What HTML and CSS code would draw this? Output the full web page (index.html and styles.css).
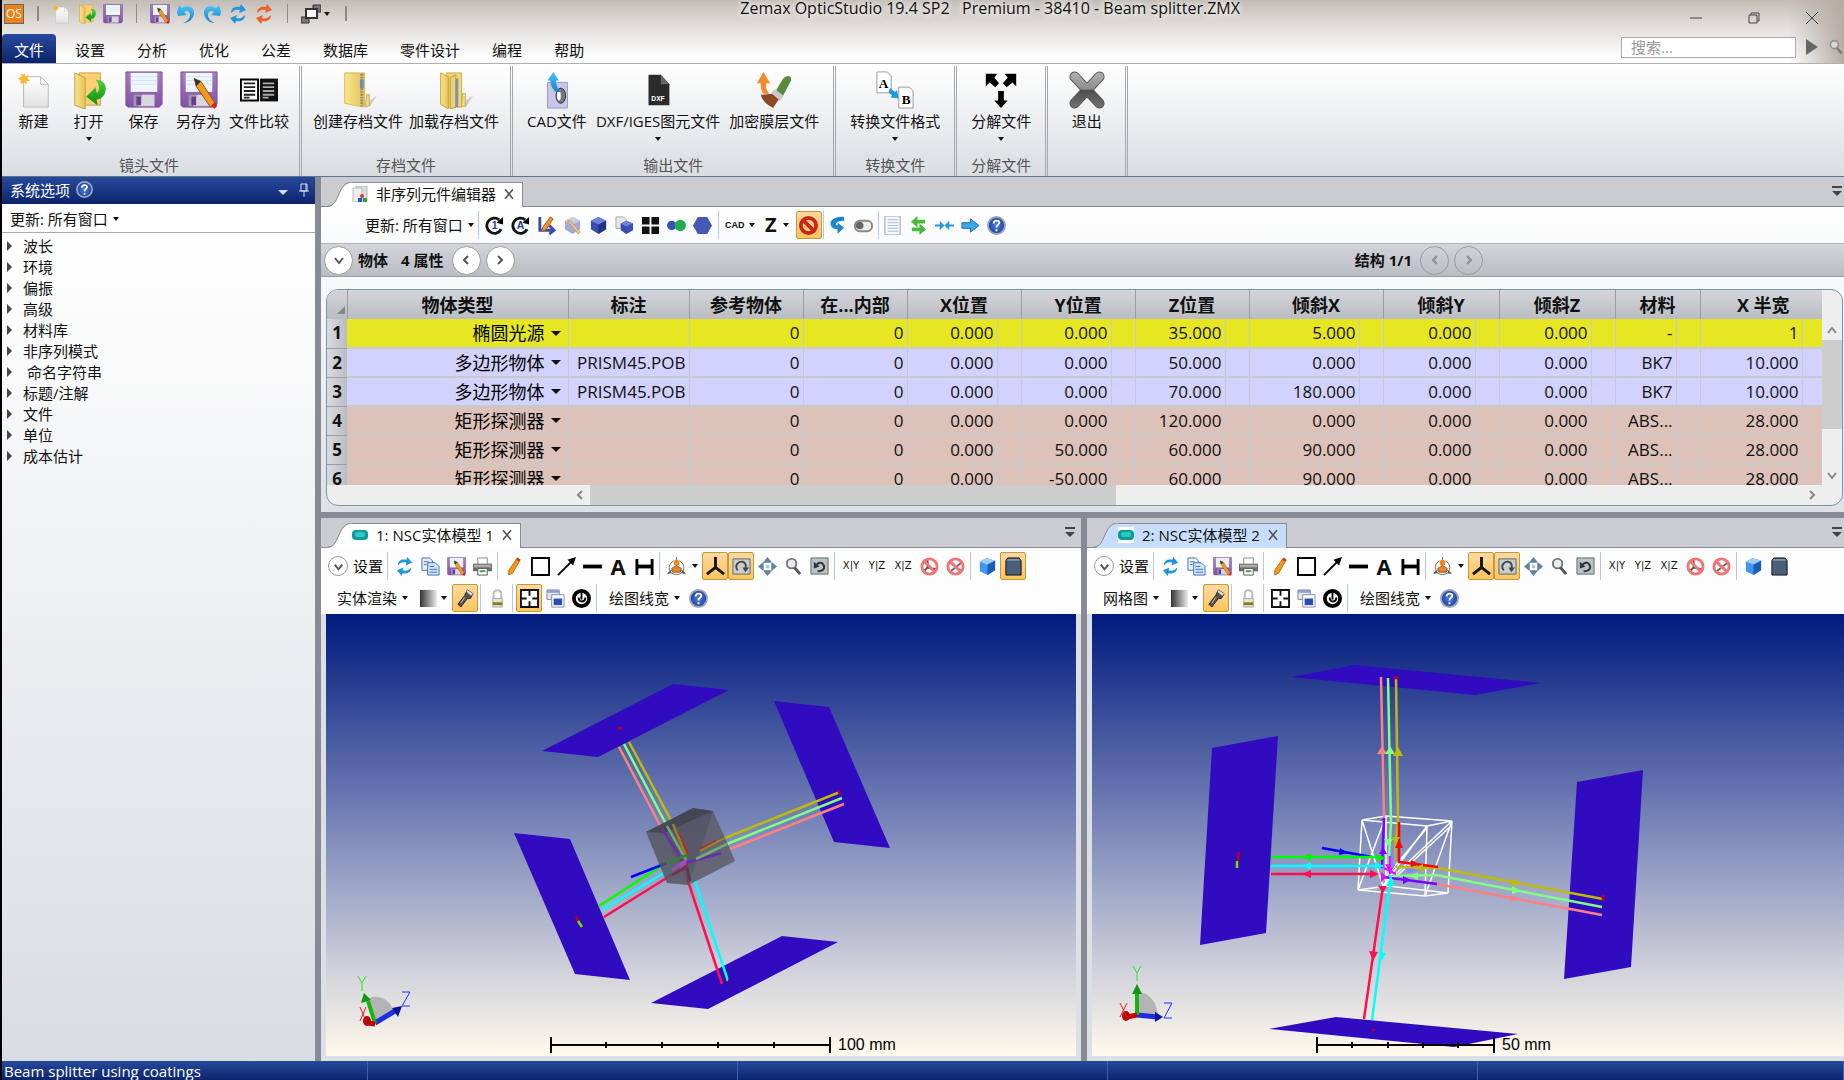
FILE: index.html
```
<!DOCTYPE html>
<html lang="zh-CN">
<head>
    <meta charset="UTF-8">
    <meta name="viewport" content="width=device-width, initial-scale=1.0">
    <title>Zemax OpticStudio</title>
    <link rel="stylesheet" href="styles.css">
</head>
<body>
<!-- 图标 -->
<svg class="sprite" aria-hidden="true">
    <defs>
        <linearGradient id="g-purple" x1="0" y1="0" x2="0" y2="1"><stop offset="0" stop-color="#a97dc4"/><stop offset="1" stop-color="#8450a8"/></linearGradient>
        <linearGradient id="g-folder" x1="0" y1="0" x2="1" y2="0"><stop offset="0" stop-color="#f7e48f"/><stop offset="1" stop-color="#e6c455"/></linearGradient>
        <linearGradient id="g-green" x1="0" y1="0" x2="0" y2="1"><stop offset="0" stop-color="#4fd33f"/><stop offset="1" stop-color="#0c8a10"/></linearGradient>
        <linearGradient id="g-blue" x1="0" y1="0" x2="0" y2="1"><stop offset="0" stop-color="#4cc3f7"/><stop offset="1" stop-color="#1583cf"/></linearGradient>
        <linearGradient id="g-gray" x1="0" y1="0" x2="0" y2="40" gradientUnits="userSpaceOnUse"><stop offset="0" stop-color="#b4b4b4"/><stop offset=".48" stop-color="#8d8d8d"/><stop offset=".5" stop-color="#4e4e4e"/><stop offset="1" stop-color="#757575"/></linearGradient>
        <linearGradient id="g-page" x1="0" y1="0" x2="0" y2="1"><stop offset="0" stop-color="#fff"/><stop offset="1" stop-color="#e2e2e2"/></linearGradient>
        <linearGradient id="g-shade" x1="0" y1="0" x2="1" y2="0"><stop offset="0" stop-color="#333"/><stop offset="1" stop-color="#eee"/></linearGradient>
        <linearGradient id="g-sky" x1="0" y1="0" x2="0" y2="1"><stop offset="0" stop-color="#001b7e"/><stop offset=".1" stop-color="#19308a"/><stop offset=".5" stop-color="#7f8bbb"/><stop offset=".8" stop-color="#cfd0da"/><stop offset="1" stop-color="#fffaec"/></linearGradient>
        <radialGradient id="g-help"><stop offset="0" stop-color="#4f7fe0"/><stop offset="1" stop-color="#1f3f9f"/></radialGradient>
    </defs>
    <symbol id="i-new" viewBox="0 0 40 40">
        <path d="M9 6h18l8 8v24H9z" fill="url(#g-page)" stroke="#b8b8b8"/>
        <path d="M27 6v8h8z" fill="#fff" stroke="#b8b8b8"/>
        <path d="M10 2l1 4 4-2-2 4 3 2-4 1 0 3-3-2-3 2 0-4-3-2 4-2-1-3 3 1z" fill="#f7b733"/>
    </symbol>
    <symbol id="i-open" viewBox="0 0 40 40">
        <path d="M10 2h22v34H10z" fill="#fbcf76" stroke="#caa13f"/>
        <path d="M5 2l11 5v33L5 36z" fill="url(#g-folder)" stroke="#c2a03a"/>
        <path d="M27 9c10 0 13 9 9 16-2 3-5 5-8 5l1 6-12-9 10-10 1 6c4-2 3-9-1-14z" fill="url(#g-green)"/>
    </symbol>
    <symbol id="i-save" viewBox="0 0 40 40">
        <path d="M1 1h38v34l-3 3H3l-2-2z" fill="url(#g-purple)" stroke="#7a4a9c"/>
        <path d="M6 2h28v20H6z" fill="#eef7fb"/>
        <path d="M6 6h28M6 10h28M6 14h28" stroke="#cfe0ea"/>
        <path d="M9 25h22v12H9z" fill="#9a9aa6"/>
        <path d="M18 25h13v12H14z" fill="#d6d6dc"/>
        <path d="M12 27h5v9h-5z" fill="#6b3d91"/>
    </symbol>
    <symbol id="i-saveas" viewBox="0 0 40 40">
        <use href="#i-save"/>
        <path d="M15 8l7 3 15 23-5 4-15-22z" fill="#f39a1c" stroke="#8a5412"/>
        <path d="M15 8l7 3-5 5z" fill="#333"/>
        <path d="M33 36l4-3 2 4-3 3z" fill="#dd2222"/>
    </symbol>
    <symbol id="i-compare" viewBox="0 0 40 40">
        <path d="M1 9h18v22H1z" fill="#fff" stroke="#000" stroke-width="2"/>
        <path d="M21 8h19v24H21z" fill="#111"/>
        <path d="M4 13h12M4 17h12M4 21h12M4 25h12M4 28h6" stroke="#222" stroke-width="2"/>
        <path d="M24 13h12M24 17h12M24 21h12M24 25h12M24 28h6" stroke="#aaa" stroke-width="2"/>
    </symbol>
    <symbol id="i-zip" viewBox="0 0 40 40">
        <path d="M28 34l12-8-8 12z" fill="#ccc"/>
        <path d="M6 2h21v35l-2 1-19-4z" fill="url(#g-folder)" stroke="#d3b75a"/>
        <path d="M29 25h3v11l-4 2z" fill="#f3dc86" stroke="#c9a948"/>
        <path d="M24 3v34" stroke="#8b8b8b" stroke-width="3" stroke-dasharray="2 1"/>
        <path d="M22 9h4v9h-4z" fill="#6c8fb6"/>
    </symbol>
    <symbol id="i-unzip" viewBox="0 0 40 40">
        <path d="M28 34l12-8-8 13z" fill="#ccc"/>
        <path d="M12 2h16v36H12z" fill="#f0d37b" stroke="#cfae4c"/>
        <path d="M6 2l8 4v34l-8-5z" fill="url(#g-folder)" stroke="#c2a03a"/>
        <path d="M16 7l6-3v34l-6 2z" fill="#ecd074" stroke="#c2a03a"/>
        <path d="M23 8v30" stroke="#7895b4" stroke-width="3"/>
        <path d="M29 24h3v12l-4 2z" fill="#f3dc86" stroke="#c9a948"/>
    </symbol>
    <symbol id="i-cad" viewBox="0 0 40 40">
        <path d="M10 12h21v27H10z" fill="#c9c6e8" stroke="#9c98cc"/>
        <ellipse cx="24" cy="26" rx="5" ry="8" fill="#777" stroke="#333"/>
        <ellipse cx="22" cy="26" rx="2" ry="5" fill="#fff"/>
        <path d="M16 1l6 9h-3c0 6 2 9 5 12h-5c-4-3-6-7-6-12h-3z" fill="url(#g-blue)"/>
    </symbol>
    <symbol id="i-dxf" viewBox="0 0 40 40">
        <path d="M10 4h13l9 10v22H10z" fill="#2b2b2b"/>
        <path d="M23 4v10h9z" fill="#666"/>
    </symbol>
    <symbol id="i-coat" viewBox="0 0 40 40">
        <path d="M29 9c3-5 10-5 9 1L28 29l-8-5z" fill="#5a8a3c"/>
        <path d="M21 19l9 7-4 6-9-9z" fill="#c9c9c9"/>
        <path d="M6 25l12-1 7 6-6 9c-6-3-11-7-13-14z" fill="#8e4b21"/>
        <path d="M9 1l7 12h-4c-1 4 0 7 3 11H9c-3-4-3-7-3-11H2z" fill="#f28c33"/>
    </symbol>
    <symbol id="i-convert" viewBox="0 0 40 40">
        <path d="M1 1h11l4 4v18H1z" fill="#fff" stroke="#999"/>
        <path d="M24 17h11l4 4v18H24z" fill="#fff" stroke="#999"/>
        <path d="M15 18l5 4 2-2 2 9-9-1 2-2-4-4z" fill="#1f9ae0"/>
    </symbol>
    <symbol id="i-split" viewBox="0 0 40 40">
        <path d="M4 3h12l-3 4 5 6-4 4-6-5-4 4zM36 3H24l3 4-5 6 4 4 6-5 4 4zM17 21h6v10h4l-7 8-7-8h4z"/>
    </symbol>
    <symbol id="i-exit" viewBox="0 0 40 40">
        <path d="M7 6l26 28M33 6L7 34" stroke="#555" stroke-width="11" stroke-linecap="round"/>
        <path d="M7 6l26 28M33 6L7 34" stroke="url(#g-gray)" stroke-width="9" stroke-linecap="round"/>
    </symbol>

    <symbol id="i-undo" viewBox="0 0 20 20"><path d="M1 8l2-7 3 3c6-4 13-1 12 6-1 5-5 9-11 9 5-2 7-5 7-8 0-4-3-5-6-3l3 3-9 1z" fill="url(#g-blue)"/></symbol>
    <symbol id="i-redo" viewBox="0 0 20 20"><path d="M19 8l-2-7-3 3C8 0 1 3 2 10c1 5 5 9 11 9-5-2-7-5-7-8 0-4 3-5 6-3l-3 3 9 1z" fill="url(#g-blue)"/></symbol>
    <symbol id="i-refresh" viewBox="0 0 20 20"><path d="M3 9c0-5 4-7 9-6l1-3 5 6-7 3 1-3c-4-1-6 0-9 3zM17 11c0 5-4 7-9 6l-1 3-5-6 7-3-1 3c4 1 6 0 9-3z" fill="#2196dc"/></symbol>
    <symbol id="i-refresh-o" viewBox="0 0 20 20"><path d="M3 9c0-5 4-7 9-6l1-3 5 6-7 3 1-3c-4-1-6 0-9 3zM17 11c0 5-4 7-9 6l-1 3-5-6 7-3-1 3c4 1 6 0 9-3z" fill="#e8622a"/></symbol>
    <symbol id="i-windows" viewBox="0 0 20 20"><path d="M12 1h8v7h-8zM0 13h8v6H0z" fill="#777" stroke="#333"/><path d="M5 5h11v9H5z" fill="#fff" stroke="#333" stroke-width="2"/></symbol>
    <symbol id="i-help" viewBox="0 0 20 20">
        <circle cx="10" cy="10" r="9" fill="url(#g-help)" stroke="#9aa5b8" stroke-width="2"/>
        <path d="M7 8c0-4 6-4 6-1 0 2-3 2-3 5M10 14v2" fill="none" stroke="#fff" stroke-width="2"/>
    </symbol>
    <symbol id="i-ring" viewBox="0 0 20 20"><path d="M15 4A8 8 0 1 0 17 14" fill="none" stroke="#111" stroke-width="3"/><path d="M12 7l7-6v8z"/></symbol>
    <symbol id="i-edit" viewBox="0 0 20 20"><path d="M3 1v14h14M13 10l5 5-5 4" fill="none" stroke="#3c4aa8" stroke-width="3"/><path d="M14 1l3 2-8 12-4 1 1-4z" fill="#f0952a" stroke="#a3561c"/></symbol>
    <symbol id="i-cube" viewBox="0 0 20 20"><path d="M2 5l8-4 8 4v9l-8 5-8-5z" fill="#3b4db0"/><path d="M2 5l8-4 8 4-8 4z" fill="#6a83d8"/><path d="M10 9l8-4v9l-8 5z" fill="#223284"/></symbol>
    <symbol id="i-cubepen" viewBox="0 0 20 20"><path d="M2 5l8-4 8 4v9l-8 5-8-5z" fill="#a3acd4"/><path d="M2 5l8-4 8 4-8 4z" fill="#c7cde8"/><path d="M5 5l3 0 10 12-2 2z" fill="#f0c590" stroke="#c99a62"/></symbol>
    <symbol id="i-cubecopy" viewBox="0 0 20 20"><path d="M1 1h8l3 3v9H1z" fill="#e4e4e4" stroke="#aaa"/><path d="M6 8l6-3 7 3v7l-7 4-6-4z" fill="#3b4db0"/><path d="M6 8l6-3 7 3-7 3z" fill="#6a83d8"/></symbol>
    <symbol id="i-four" viewBox="0 0 20 20"><path d="M1 1h8v8H1zM11 1h8v8h-8zM1 11h8v8H1zM11 11h8v8h-8z" fill="#111"/></symbol>
    <symbol id="i-dots" viewBox="0 0 20 20"><circle cx="5" cy="10" r="5" fill="#3c4fb5"/><circle cx="14" cy="10" r="6" fill="#1fae52"/></symbol>
    <symbol id="i-hex" viewBox="0 0 20 20"><path d="M5 1h10l5 9-5 9H5l-5-9z" fill="#4858b5"/></symbol>
    <symbol id="i-no" viewBox="0 0 20 20"><circle cx="10" cy="10" r="8" fill="none" stroke="#c8281b" stroke-width="4"/><path d="M4 4l12 12" stroke="#c8281b" stroke-width="4"/></symbol>
    <symbol id="i-back" viewBox="0 0 20 20"><path d="M17 1C8 0 1 4 3 10c1 3 4 4 7 4v5l7-7-7-5v3C6 9 9 5 17 5z" fill="#1e86cc"/></symbol>
    <symbol id="i-switch" viewBox="0 0 20 20"><rect x="1" y="5" width="18" height="11" rx="5" fill="#eee" stroke="#888" stroke-width="2"/><circle cx="6" cy="10" r="4" fill="#666"/></symbol>
    <symbol id="i-sheet" viewBox="0 0 20 20"><path d="M2 0h16v20H2z" fill="#f4f7fb" stroke="#8fa0b2"/><path d="M5 4h11M5 7h11M5 10h11M5 13h11M5 16h11" stroke="#a8bdd6"/></symbol>
    <symbol id="i-swap" viewBox="0 0 20 20"><path d="M2 6l7-6v4h8v4H9v4zM18 14l-7-6v4H3v4h8v4z" fill="#4cb83c"/></symbol>
    <symbol id="i-meet" viewBox="0 0 20 20"><path d="M0 9h5V5l5 5-5 5v-4H0zM20 9h-5V5l-5 5 5 5v-4h5z" fill="#2a9ae0"/></symbol>
    <symbol id="i-right" viewBox="0 0 20 20"><path d="M1 7h9V3l9 7-9 7v-4H1z" fill="#3aa7e6" stroke="#1c6fae"/></symbol>
    <symbol id="i-copy" viewBox="0 0 20 20"><path d="M1 1h8l3 3v10H1z" fill="#e8f1fc" stroke="#3d6fb3"/><path d="M7 6h8l4 4v9H7z" fill="#d2e4fa" stroke="#3d6fb3"/><path d="M9 10h5M9 13h8M9 16h8M3 5h5M3 8h3" stroke="#3d6fb3"/></symbol>
    <symbol id="i-print" viewBox="0 0 20 20"><path d="M5 1h10v7H5z" fill="#fff" stroke="#888"/><path d="M0 7h20v8H0z" fill="#6c6c6c"/><path d="M1 8h18v3H1z" fill="#aaa"/><path d="M5 12h10v7H5z" fill="#fff" stroke="#555"/><path d="M7 15h6" stroke="#37a63b" stroke-width="2"/></symbol>
    <symbol id="i-pencil" viewBox="0 0 20 20"><path d="M13 1l3 2-8 14-4 2 0-5z" fill="#f39a1c" stroke="#b56a14"/><path d="M13 1l3 2-1 2-3-2z" fill="#cf2f22"/></symbol>
    <symbol id="i-rect" viewBox="0 0 20 20"><path d="M1 1h18v18H1z" fill="#fff" stroke="#000" stroke-width="2"/></symbol>
    <symbol id="i-arrow" viewBox="0 0 20 20"><path d="M1 19L16 4" stroke="#000" stroke-width="2"/><path d="M20 0l-3 9-6-6z"/></symbol>
    <symbol id="i-line" viewBox="0 0 20 20"><path d="M0 10h20" stroke="#000" stroke-width="4"/></symbol>
    <symbol id="i-dim" viewBox="0 0 20 20"><path d="M2 2v17M18 2v17" stroke="#000" stroke-width="3"/><path d="M2 10h16" stroke="#000" stroke-width="4"/></symbol>
    <symbol id="i-tripod" viewBox="0 0 20 20"><path d="M10 10V0M10 10l9 7M10 10l-9 7M7 4c-5 3-6 8-3 12M13 4c5 3 6 8 3 12M5 17c3 2 7 2 10 0" fill="none" stroke="#666"/><circle cx="10" cy="6" r="3" fill="#f08a1d"/><path d="M5 12l5-3 5 3-1 4H6z" fill="#e9842a" stroke="#8f5a2a"/><path d="M0 18l4-4 1 3zM20 18l-4-4-1 3z" fill="#555"/></symbol>
    <symbol id="i-axes" viewBox="0 0 20 20"><path d="M10 0v11L1 18M10 11l9 7" fill="none" stroke="#111" stroke-width="3"/></symbol>
    <symbol id="i-rotate" viewBox="0 0 20 20"><path d="M1 2h18v16H1z" fill="#c6cfc9" stroke="#58676a"/><path d="M6 14c-4-5 1-10 5-9s4 5 3 7" fill="none" stroke="#445" stroke-width="2"/><path d="M11 11h7l-4 5z" fill="#445"/></symbol>
    <symbol id="i-revert" viewBox="0 0 20 20"><path d="M1 1h18v17H1z" fill="#b9c3c0" stroke="#58676a"/><path d="M8 15c7 0 8-4 6-7s-5-2-7 0" fill="none" stroke="#334" stroke-width="2"/><path d="M4 5v7l6-2z" fill="#334"/></symbol>
    <symbol id="i-move" viewBox="0 0 20 20"><path d="M10 0l5 6H5zM10 20l5-6H5zM0 10l6-5v10zM20 10l-6-5v10z" fill="#5f82a3"/><circle cx="10" cy="10" r="2" fill="#b8c6d3"/></symbol>
    <symbol id="i-zoom" viewBox="0 0 20 20"><circle cx="8" cy="7" r="5" fill="#e8eef2" stroke="#777" stroke-width="2"/><path d="M11 11l6 7" stroke="#555" stroke-width="3"/></symbol>
    <symbol id="i-noray" viewBox="0 0 20 20"><path d="M8 3v8l-4 4M8 11l9 2" fill="none" stroke="#555" stroke-width="2"/><circle cx="10" cy="10" r="8" fill="none" stroke="#f07575" stroke-width="3"/><path d="M4 4l12 12" stroke="#f07575" stroke-width="3"/></symbol>
    <symbol id="i-noaxes" viewBox="0 0 20 20"><path d="M5 6l11 9M5 15l11-9" fill="none" stroke="#666" stroke-width="2"/><circle cx="10" cy="10" r="8" fill="none" stroke="#f07575" stroke-width="3"/><path d="M4 4l12 12" stroke="#f07575" stroke-width="3"/></symbol>
    <symbol id="i-bluecube" viewBox="0 0 20 20"><path d="M2 5l7-4 9 3v10l-8 5-8-4z" fill="#3f96ee"/><path d="M2 5l7-4 9 3-8 4z" fill="#9dcdf9"/><path d="M10 8l8-4v10l-8 5z" fill="#1d5fae"/></symbol>
    <symbol id="i-body" viewBox="0 0 20 20"><path d="M4 1h12l2 3v15H2V4z" fill="#4a5f7a" stroke="#111" stroke-width="1"/><path d="M4 2h12l1 2H3z" fill="#8397ad"/></symbol>
    <symbol id="i-shade" viewBox="0 0 20 20"><path d="M1 1h18v18H1z" fill="url(#g-shade)"/></symbol>
    <symbol id="i-torch" viewBox="0 0 20 20"><path d="M12 1l6 4-3 5h-3l-7 9-3-3 7-9z" fill="#555" stroke="#222"/><path d="M12 1l6 4-2 2-5-4z" fill="#ddd"/><path d="M9 9l-4 6" stroke="#ccc"/></symbol>
    <symbol id="i-lock" viewBox="0 0 20 20"><path d="M6 11V5c0-5 8-5 8 0v6" fill="none" stroke="#bbb" stroke-width="2"/><path d="M5 10h10v9H5z" fill="#e6e6c8" stroke="#aaa"/><path d="M5 14h10v3H5z" fill="#8a7a22"/></symbol>
    <symbol id="i-fit" viewBox="0 0 20 20"><path d="M1 1h18v18H1z" fill="#fff" stroke="#111" stroke-width="2"/><path d="M10 2v5M10 13v5M2 10h5M13 10h5" stroke="#111" stroke-width="2"/></symbol>
    <symbol id="i-clone" viewBox="0 0 20 20"><path d="M1 1h13v10H1z" fill="#dfe6f2" stroke="#7d8db0"/><path d="M1 1h13v3H1z" fill="#8ca0c8"/><path d="M6 6h13v13H6z" fill="#fff" stroke="#7d8db0"/><path d="M8 10h9v7H8z" fill="#2b4fb0"/></symbol>
    <symbol id="i-clock" viewBox="0 0 20 20"><circle cx="10" cy="10" r="8" fill="#fff" stroke="#000" stroke-width="4"/><path d="M10 4v7M7 9c0 6 7 5 7 0" fill="none" stroke="#000" stroke-width="2"/></symbol>
    <symbol id="i-pill" viewBox="0 0 16 16"><rect x="0" y="3" width="16" height="10" rx="4" fill="#0b9a98"/><rect x="3" y="5" width="10" height="5" rx="2" fill="#2cc9c4"/></symbol>
    <symbol id="i-editor" viewBox="0 0 16 16"><path d="M4 0h11v14H4z" fill="#d9dde0" stroke="#b6babd"/><path d="M1 2h9v14H1z" fill="#eceeef" stroke="#bbb"/><circle cx="10" cy="10" r="2" fill="#d93a2b"/><path d="M6 12h4v4H6z" fill="#2c59c0"/><path d="M11 12h4v4h-4z" fill="#2fa33c"/></symbol>
    <symbol id="i-down" viewBox="0 0 20 20"><path d="M6 8l4 5 4-5" fill="none" stroke="currentColor" stroke-width="2"/></symbol>
    <symbol id="i-up" viewBox="0 0 20 20"><path d="M6 13l4-5 4 5" fill="none" stroke="currentColor" stroke-width="2"/></symbol>
    <symbol id="i-prev" viewBox="0 0 20 20"><path d="M12 6l-4 4 4 4" fill="none" stroke="currentColor" stroke-width="2"/></symbol>
    <symbol id="i-next" viewBox="0 0 20 20"><path d="M8 6l4 4-4 4" fill="none" stroke="currentColor" stroke-width="2"/></symbol>
    <symbol id="i-x" viewBox="0 0 20 20"><path d="M5 4l10 12M15 4L5 16" stroke="#555" stroke-width="2"/></symbol>
    <symbol id="i-list" viewBox="0 0 12 12"><path d="M1 1h10v2H1zM1 6h10l-5 5z" fill="#444"/></symbol>
    <symbol id="i-tab" viewBox="0 0 24 25" preserveAspectRatio="none"><path d="M0 25C12 24 10 1 24 1v24z" fill="currentColor"/><path d="M0 24C12 24 9 0 24 0" fill="none" stroke="#888b96"/></symbol>
</svg>

<div class="app">
    <header class="titlebar">
        <div class="title-row">
            <div class="quick">
                <span class="logo">OS</span>
                <i class="bar"></i>
                <button aria-label="新建"><svg><use href="#i-new"/></svg></button>
                <button aria-label="打开"><svg><use href="#i-open"/></svg></button>
                <button aria-label="保存"><svg><use href="#i-save"/></svg></button>
                <i class="bar thin"></i>
                <button aria-label="另存为"><svg><use href="#i-saveas"/></svg></button>
                <button aria-label="撤消"><svg><use href="#i-undo"/></svg></button>
                <button aria-label="重做"><svg><use href="#i-redo"/></svg></button>
                <button aria-label="更新"><svg><use href="#i-refresh"/></svg></button>
                <button aria-label="更新全部"><svg><use href="#i-refresh-o"/></svg></button>
                <i class="bar thin"></i>
                <button class="wide" aria-label="窗口"><svg><use href="#i-windows"/></svg><i class="caret"></i></button>
                <i class="bar"></i>
            </div>
            <h1 class="app-title">Zemax OpticStudio 19.4 SP2   Premium - 38410 - Beam splitter.ZMX</h1>
            <div class="win-buttons">
                <button aria-label="最小化"><svg viewBox="0 0 12 12"><path d="M0 6h12"/></svg></button>
                <button aria-label="还原"><svg viewBox="0 0 12 12"><path d="M1 3h8v8H1zM3 3V1h8v8H9"/></svg></button>
                <button aria-label="关闭"><svg viewBox="0 0 12 12"><path d="M0 0l12 12M12 0L0 12"/></svg></button>
            </div>
        </div>
        <div class="menu-row">
            <nav class="menu">
                <a class="active" href="#">文件</a>
                <a href="#">设置</a>
                <a href="#">分析</a>
                <a href="#">优化</a>
                <a href="#">公差</a>
                <a href="#">数据库</a>
                <a href="#">零件设计</a>
                <a href="#">编程</a>
                <a href="#">帮助</a>
            </nav>
            <div class="search">
                <input type="text" placeholder="搜索..." aria-label="搜索">
                <button aria-label="执行搜索"><svg viewBox="0 0 12 16"><path d="M0 0l12 8-12 8z" fill="#666"/></svg></button>
                <svg class="lens"><use href="#i-zoom"/></svg>
            </div>
        </div>
    </header>

    <div class="ribbon">
        <section class="group lens-files">
            <div class="group-items">
                <button><svg><use href="#i-new"/></svg>新建</button>
                <button><svg><use href="#i-open"/></svg>打开<i class="caret"></i></button>
                <button><svg><use href="#i-save"/></svg>保存</button>
                <button><svg><use href="#i-saveas"/></svg>另存为</button>
                <button><svg><use href="#i-compare"/></svg>文件比较</button>
            </div>
            <h2>镜头文件</h2>
        </section>
        <section class="group archive">
            <div class="group-items">
                <button><svg><use href="#i-zip"/></svg>创建存档文件</button>
                <button><svg><use href="#i-unzip"/></svg>加载存档文件</button>
            </div>
            <h2>存档文件</h2>
        </section>
        <section class="group">
            <div class="group-items">
                <button><svg><use href="#i-cad"/></svg>CAD文件</button>
                <button><svg viewBox="0 0 40 40"><use href="#i-dxf"/><text x="13" y="32" class="t-dxf">DXF</text></svg>DXF/IGES图元文件<i class="caret"></i></button>
                <button><svg><use href="#i-coat"/></svg>加密膜层文件</button>
            </div>
            <h2>输出文件</h2>
        </section>
        <section class="group">
            <div class="group-items">
                <button><svg viewBox="0 0 40 40"><use href="#i-convert"/><text x="3" y="18" class="t-ab">A</text><text x="27" y="35" class="t-ab">B</text></svg>转换文件格式<i class="caret"></i></button>
            </div>
            <h2>转换文件</h2>
        </section>
        <section class="group">
            <div class="group-items">
                <button><svg><use href="#i-split"/></svg>分解文件<i class="caret"></i></button>
            </div>
            <h2>分解文件</h2>
        </section>
        <section class="group">
            <div class="group-items">
                <button><svg><use href="#i-exit"/></svg>退出</button>
            </div>
        </section>
    </div>

    <div class="main">
        <aside class="sidebar">
            <div class="side-head">
                <span>系统选项</span>
                <svg class="help"><use href="#i-help"/></svg>
                <button class="push" aria-label="菜单"><i class="caret big"></i></button>
                <button aria-label="固定"><svg class="pin" viewBox="0 0 10 14"><path d="M2 1h6v7H2zM0 8h10M5 8v6M7 1v7" fill="none" stroke="#d5dcf0"/></svg></button>
            </div>
            <button class="side-update">更新: 所有窗口<i class="caret"></i></button>
            <ul class="tree">
                <li><button>波长</button></li>
                <li><button>环境</button></li>
                <li><button>偏振</button></li>
                <li><button>高级</button></li>
                <li><button>材料库</button></li>
                <li><button>非序列模式</button></li>
                <li><button>&nbsp;命名字符串</button></li>
                <li><button>标题/注解</button></li>
                <li><button>文件</button></li>
                <li><button>单位</button></li>
                <li><button>成本估计</button></li>
            </ul>
        </aside>

        <div class="work">
            <section class="panel editor">
                <div class="tabs">
                    <div class="tab">
                        <svg class="slope"><use href="#i-tab"/></svg>
                        <div class="tab-body"><svg><use href="#i-editor"/></svg><span>非序列元件编辑器</span><button aria-label="关闭"><svg><use href="#i-x"/></svg></button></div>
                    </div>
                    <svg class="tab-list"><use href="#i-list"/></svg>
                </div>
                <div class="toolbar">
                    <button class="text first">更新: 所有窗口<i class="caret"></i></button>
                    <i class="sep"></i>
                    <button aria-label="更新一次"><svg viewBox="0 0 20 20"><use href="#i-ring"/><text x="7" y="14" class="t-ring">1</text></svg></button>
                    <button aria-label="自动更新"><svg viewBox="0 0 20 20"><use href="#i-ring"/><text x="6" y="14" class="t-ring">A</text></svg></button>
                    <button aria-label="编辑"><svg><use href="#i-edit"/></svg></button>
                    <button aria-label="编辑物体"><svg><use href="#i-cubepen"/></svg></button>
                    <button aria-label="物体"><svg><use href="#i-cube"/></svg></button>
                    <button aria-label="复制物体"><svg><use href="#i-cubecopy"/></svg></button>
                    <button aria-label="阵列"><svg><use href="#i-four"/></svg></button>
                    <button aria-label="布尔"><svg><use href="#i-dots"/></svg></button>
                    <button aria-label="多边形"><svg><use href="#i-hex"/></svg></button>
                    <i class="sep"></i>
                    <button class="cad">CAD<i class="caret"></i></button>
                    <button class="zed">Z<i class="caret"></i></button>
                    <button class="on" aria-label="忽略"><svg><use href="#i-no"/></svg></button>
                    <i class="sep near"></i>
                    <button aria-label="返回"><svg><use href="#i-back"/></svg></button>
                    <button aria-label="切换"><svg><use href="#i-switch"/></svg></button>
                    <i class="sep near"></i>
                    <button aria-label="表格"><svg><use href="#i-sheet"/></svg></button>
                    <button aria-label="交换"><svg><use href="#i-swap"/></svg></button>
                    <button aria-label="列宽"><svg><use href="#i-meet"/></svg></button>
                    <button aria-label="前往"><svg><use href="#i-right"/></svg></button>
                    <button aria-label="帮助"><svg><use href="#i-help"/></svg></button>
                </div>
                <div class="propbar">
                    <button class="round" aria-label="展开"><svg><use href="#i-down"/></svg></button>
                    <b>物体</b>
                    <b class="prop-no">4 属性</b>
                    <button class="round" aria-label="上一个"><svg><use href="#i-prev"/></svg></button>
                    <button class="round" aria-label="下一个"><svg><use href="#i-next"/></svg></button>
                    <b class="config">结构 1/1</b>
                    <button class="round off" aria-label="上一个结构" disabled><svg><use href="#i-prev"/></svg></button>
                    <button class="round off" aria-label="下一个结构" disabled><svg><use href="#i-next"/></svg></button>
                </div>
                <div class="grid-wrap">
                    <div class="grid-box">
                        <div class="grid-view">
                            <table class="grid">
                                <colgroup>
                                    <col class="c-no"><col class="c-type"><col class="c-note"><col class="c-ref"><col class="c-in">
                                    <col class="c-pos"><col class="c-fit"><col class="c-pos"><col class="c-fit"><col class="c-pos"><col class="c-fit">
                                    <col class="c-tiltx"><col class="c-fit"><col class="c-tilt"><col class="c-fit"><col class="c-tilt"><col class="c-fit">
                                    <col class="c-mat"><col class="c-fit"><col class="c-half"><col>
                                </colgroup>
                                <thead>
                                <tr>
                                    <th class="corner"><i></i></th>
                                    <th>物体类型</th><th>标注</th><th>参考物体</th><th>在...内部</th>
                                    <th colspan="2">X位置</th><th colspan="2">Y位置</th><th colspan="2">Z位置</th>
                                    <th colspan="2">倾斜X</th><th colspan="2">倾斜Y</th><th colspan="2">倾斜Z</th>
                                    <th colspan="2">材料</th><th colspan="2">X 半宽</th>
                                </tr>
                                </thead>
                                <tbody>
                                <tr class="source">
                                    <th>1</th>
                                    <td class="type"><span><select aria-label="物体类型 1"><option>椭圆光源</option></select></span></td>
                                    <td></td><td>0</td><td>0</td><td>0.000</td><td></td><td>0.000</td><td></td><td>35.000</td><td></td><td>5.000</td><td></td><td>0.000</td><td></td><td>0.000</td><td></td><td>-</td><td></td><td>1</td><td></td>
                                </tr>
                                <tr class="solid">
                                    <th>2</th>
                                    <td class="type"><span><select aria-label="物体类型 2"><option>多边形物体</option></select></span></td>
                                    <td>PRISM45.POB</td><td>0</td><td>0</td><td>0.000</td><td></td><td>0.000</td><td></td><td>50.000</td><td></td><td>0.000</td><td></td><td>0.000</td><td></td><td>0.000</td><td></td><td>BK7</td><td></td><td>10.000</td><td></td>
                                </tr>
                                <tr class="solid">
                                    <th>3</th>
                                    <td class="type"><span><select aria-label="物体类型 3"><option>多边形物体</option></select></span></td>
                                    <td>PRISM45.POB</td><td>0</td><td>0</td><td>0.000</td><td></td><td>0.000</td><td></td><td>70.000</td><td></td><td>180.000</td><td></td><td>0.000</td><td></td><td>0.000</td><td></td><td>BK7</td><td></td><td>10.000</td><td></td>
                                </tr>
                                <tr class="detector">
                                    <th>4</th>
                                    <td class="type"><span><select aria-label="物体类型 4"><option>矩形探测器</option></select></span></td>
                                    <td></td><td>0</td><td>0</td><td>0.000</td><td></td><td>0.000</td><td></td><td>120.000</td><td></td><td>0.000</td><td></td><td>0.000</td><td></td><td>0.000</td><td></td><td>ABS...</td><td></td><td>28.000</td><td></td>
                                </tr>
                                <tr class="detector">
                                    <th>5</th>
                                    <td class="type"><span><select aria-label="物体类型 5"><option>矩形探测器</option></select></span></td>
                                    <td></td><td>0</td><td>0</td><td>0.000</td><td></td><td>50.000</td><td></td><td>60.000</td><td></td><td>90.000</td><td></td><td>0.000</td><td></td><td>0.000</td><td></td><td>ABS...</td><td></td><td>28.000</td><td></td>
                                </tr>
                                <tr class="detector">
                                    <th>6</th>
                                    <td class="type"><span><select aria-label="物体类型 6"><option>矩形探测器</option></select></span></td>
                                    <td></td><td>0</td><td>0</td><td>0.000</td><td></td><td>-50.000</td><td></td><td>60.000</td><td></td><td>90.000</td><td></td><td>0.000</td><td></td><td>0.000</td><td></td><td>ABS...</td><td></td><td>28.000</td><td></td>
                                </tr>
                                </tbody>
                            </table>
                        </div>
                        <div class="vscroll">
                            <svg><use href="#i-up"/></svg>
                            <div class="vthumb"></div>
                            <svg class="end"><use href="#i-down"/></svg>
                        </div>
                        <div class="hscroll">
                            <svg><use href="#i-prev"/></svg>
                            <div class="hthumb"></div>
                            <svg class="end"><use href="#i-next"/></svg>
                        </div>
                    </div>
                </div>
            </section>

            <section class="panel view">
                <div class="tabs">
                    <div class="tab">
                        <svg class="slope"><use href="#i-tab"/></svg>
                        <div class="tab-body"><svg><use href="#i-pill"/></svg><span>1: NSC实体模型 1</span><button aria-label="关闭"><svg><use href="#i-x"/></svg></button></div>
                    </div>
                    <svg class="tab-list"><use href="#i-list"/></svg>
                </div>
                <div class="view-tools">
                    <div class="toolbar">
                        <button class="round small" aria-label="展开"><svg><use href="#i-down"/></svg></button>
                        <button class="text set">设置</button>
                        <i class="sep"></i>
                        <button aria-label="更新"><svg><use href="#i-refresh"/></svg></button>
                        <button aria-label="复制"><svg><use href="#i-copy"/></svg></button>
                        <button aria-label="保存"><svg><use href="#i-saveas"/></svg></button>
                        <button aria-label="打印"><svg><use href="#i-print"/></svg></button>
                        <i class="sep"></i>
                        <button aria-label="铅笔"><svg><use href="#i-pencil"/></svg></button>
                        <button aria-label="矩形"><svg><use href="#i-rect"/></svg></button>
                        <button aria-label="箭头"><svg><use href="#i-arrow"/></svg></button>
                        <button aria-label="直线"><svg><use href="#i-line"/></svg></button>
                        <button class="letter">A</button>
                        <button aria-label="尺寸"><svg><use href="#i-dim"/></svg></button>
                        <i class="sep"></i>
                        <button aria-label="视角"><svg><use href="#i-tripod"/></svg></button><i class="caret gap"></i>
                        <button class="on" aria-label="坐标轴"><svg><use href="#i-axes"/></svg></button>
                        <button class="on" aria-label="旋转"><svg><use href="#i-rotate"/></svg></button>
                        <button aria-label="平移"><svg><use href="#i-move"/></svg></button>
                        <button aria-label="缩放"><svg><use href="#i-zoom"/></svg></button>
                        <button aria-label="复位"><svg><use href="#i-revert"/></svg></button>
                        <i class="sep"></i>
                        <button class="plane">X|Y</button>
                        <button class="plane">Y|Z</button>
                        <button class="plane">X|Z</button>
                        <button aria-label="隐藏光线"><svg><use href="#i-noray"/></svg></button>
                        <button aria-label="隐藏坐标"><svg><use href="#i-noaxes"/></svg></button>
                        <i class="sep"></i>
                        <button aria-label="立方体"><svg><use href="#i-bluecube"/></svg></button>
                        <button class="on" aria-label="实体"><svg><use href="#i-body"/></svg></button>
                    </div>
                    <div class="toolbar second">
                        <button class="text">实体渲染<i class="caret"></i></button>
                        <button class="grad" aria-label="背景"><svg><use href="#i-shade"/></svg><i class="caret"></i></button>
                        <button class="on" aria-label="照明"><svg><use href="#i-torch"/></svg></button>
                        <i class="sep"></i>
                        <button aria-label="锁定"><svg><use href="#i-lock"/></svg></button>
                        <i class="sep"></i>
                        <button class="on" aria-label="适应窗口"><svg><use href="#i-fit"/></svg></button>
                        <button aria-label="克隆"><svg><use href="#i-clone"/></svg></button>
                        <button aria-label="时间"><svg><use href="#i-clock"/></svg></button>
                        <i class="sep"></i>
                        <button class="text lw">绘图线宽<i class="caret"></i></button>
                        <button aria-label="帮助"><svg><use href="#i-help"/></svg></button>
                    </div>
                </div>
                <div class="stage">
                    <svg viewBox="326 614 750 442" preserveAspectRatio="xMidYMid slice">
                        <path d="M0 614h1844v442H0z" fill="url(#g-sky)"/>
                        <g fill="#300bc0">
                            <path d="M542 751l131-67 56 6-131 67zM774 701l55 6 61 141-56-6zM514 833l56 6 60 141-55-6zM651 1003l131-67 56 6-130 67z"/>
                        </g>
                        <g class="rays">
                            <path d="M629 742l44 82 15 34M725 838l115-46" stroke="#bdbb06"/>
                            <path d="M624 744l43 82 20 34M727 844l115-46" stroke="#80ff80"/>
                            <path d="M619 747l43 82M730 849l114-45" stroke="#ff8080"/>
                            <path d="M599 906l67-43 20-6" stroke="#0f0"/>
                            <path d="M602 910l70-42 14-6 10 22 32 97" stroke="#0ff"/>
                            <path d="M604 917l69-43 14-6 1 13 34 103" stroke="#ff0f4b"/>
                            <path d="M631 877l36-14" stroke="#00f"/>
                        </g>
                        <g fill="#4d4d58" fill-opacity=".82">
                            <path d="M646 832l47-24 20 3 22 50-47 24-21-2z"/>
                            <path d="M646 832l47-24 20 3-49 22z" fill="#3c3c48" fill-opacity=".6"/>
                            <path d="M713 811l-12 38-13 36 47-24z" fill="#77778a" fill-opacity=".35"/>
                            <path d="M664 833l24 52-21-2-21-51z" fill="#888" fill-opacity=".15"/>
                        </g>
                        <g class="rays">
                            <path d="M662 829l22 34M686 863l35-10" stroke="#6a2dab"/>
                            <path d="M667 826l19 34M696 859l31-15" stroke="#6fae77"/>
                            <path d="M676 829l12 25M700 849l16-8" stroke="#b02c24"/>
                            <path d="M673 824l13 32M700 851l25-13" stroke="#93822c"/>
                            <path d="M667 863l20-8" stroke="#35803e"/>
                            <path d="M672 870l14-10M686 862l-6 6" stroke="#a34bb0"/>
                            <path d="M672 875l15-9 3 15" stroke="#71304f"/>
                            <path d="M618 729l4-1M838 790l2 4M576 916l2 5M728 980h2" stroke="#b80016"/>
                            <path d="M578 921l4 6" stroke="#7be000"/>
                        </g>
                        <g class="scale"><path d="M551 1045h279M551 1037v16M830 1037v16M606 1042v6M662 1042v6M718 1042v6M774 1042v6"/><text x="838" y="1050">100 mm</text></g>
                        <g class="triad">
                            <path d="M375 1023l-6-25c10-4 20 2 24 11z" fill="#b4b4b4"/>
                            <path d="M375 1023l20-12" stroke="#1a2fe0" stroke-width="5"/><path d="M402 1006l-4 11-6-9z" fill="#0a1798"/>
                            <path d="M375 1023l-7-22" stroke="#12b512" stroke-width="4"/><path d="M364 993l-3 10 10-3z" fill="#0a9a0a"/>
                            <path d="M375 1024l-7-1" stroke="#c00" stroke-width="5"/><ellipse cx="367" cy="1021" rx="4" ry="5" fill="#b50a0a"/>
                            <path d="M358 976l4 7 4-7M362 983v8" stroke="#2fe22f"/>
                            <path d="M402 992h8l-8 14h8" stroke="#1c30ff"/>
                            <path d="M360 1007l6 14M366 1007l-6 14" stroke="#f01818"/>
                        </g>
                    </svg>
                </div>
            </section>

            <section class="panel view right">
                <div class="tabs">
                    <div class="tab current">
                        <svg class="slope"><use href="#i-tab"/></svg>
                        <div class="tab-body"><svg class="plate"><use href="#i-pill"/></svg><span>2: NSC实体模型 2</span><button aria-label="关闭"><svg><use href="#i-x"/></svg></button></div>
                    </div>
                    <svg class="tab-list"><use href="#i-list"/></svg>
                </div>
                <div class="view-tools">
                    <div class="toolbar">
                        <button class="round small" aria-label="展开"><svg><use href="#i-down"/></svg></button>
                        <button class="text set">设置</button>
                        <i class="sep"></i>
                        <button aria-label="更新"><svg><use href="#i-refresh"/></svg></button>
                        <button aria-label="复制"><svg><use href="#i-copy"/></svg></button>
                        <button aria-label="保存"><svg><use href="#i-saveas"/></svg></button>
                        <button aria-label="打印"><svg><use href="#i-print"/></svg></button>
                        <i class="sep"></i>
                        <button aria-label="铅笔"><svg><use href="#i-pencil"/></svg></button>
                        <button aria-label="矩形"><svg><use href="#i-rect"/></svg></button>
                        <button aria-label="箭头"><svg><use href="#i-arrow"/></svg></button>
                        <button aria-label="直线"><svg><use href="#i-line"/></svg></button>
                        <button class="letter">A</button>
                        <button aria-label="尺寸"><svg><use href="#i-dim"/></svg></button>
                        <i class="sep"></i>
                        <button aria-label="视角"><svg><use href="#i-tripod"/></svg></button><i class="caret gap"></i>
                        <button class="on" aria-label="坐标轴"><svg><use href="#i-axes"/></svg></button>
                        <button class="on" aria-label="旋转"><svg><use href="#i-rotate"/></svg></button>
                        <button aria-label="平移"><svg><use href="#i-move"/></svg></button>
                        <button aria-label="缩放"><svg><use href="#i-zoom"/></svg></button>
                        <button aria-label="复位"><svg><use href="#i-revert"/></svg></button>
                        <i class="sep"></i>
                        <button class="plane">X|Y</button>
                        <button class="plane">Y|Z</button>
                        <button class="plane">X|Z</button>
                        <button aria-label="隐藏光线"><svg><use href="#i-noray"/></svg></button>
                        <button aria-label="隐藏坐标"><svg><use href="#i-noaxes"/></svg></button>
                        <i class="sep"></i>
                        <button aria-label="立方体"><svg><use href="#i-bluecube"/></svg></button>
                        <button aria-label="实体"><svg><use href="#i-body"/></svg></button>
                    </div>
                    <div class="toolbar second">
                        <button class="text">网格图<i class="caret"></i></button>
                        <button class="grad" aria-label="背景"><svg><use href="#i-shade"/></svg><i class="caret"></i></button>
                        <button class="on" aria-label="照明"><svg><use href="#i-torch"/></svg></button>
                        <i class="sep"></i>
                        <button aria-label="锁定"><svg><use href="#i-lock"/></svg></button>
                        <i class="sep"></i>
                        <button aria-label="适应窗口"><svg><use href="#i-fit"/></svg></button>
                        <button aria-label="克隆"><svg><use href="#i-clone"/></svg></button>
                        <button aria-label="时间"><svg><use href="#i-clock"/></svg></button>
                        <i class="sep"></i>
                        <button class="text lw">绘图线宽<i class="caret"></i></button>
                        <button aria-label="帮助"><svg><use href="#i-help"/></svg></button>
                    </div>
                </div>
                <div class="stage">
                    <svg viewBox="1092 614 752 442" preserveAspectRatio="xMidYMid slice">
                        <path d="M0 614h2844v442H0z" fill="url(#g-sky)"/>
                        <g fill="#300bc0">
                            <path d="M1291 677l64-12 186 18-66 12zM1212 748l66-12-12 197-66 12zM1577 782l66-12-12 197-67 12zM1269 1029l67-12 182 17-64 13z"/>
                        </g>
                        <g class="wire">
                            <path d="M1362 820l24-4 66 5-25 5zM1358 890l4-70M1448 893l4-72M1425 896l2-70M1358 890l67 6 23-3-60-7zM1362 820l21 66 44-60M1358 890l28-74v70M1383 886l69-65-27 75M1386 886l66-61M1383 880l44-52"/>
                        </g>
                        <g class="rays">
                            <path d="M1381 677l3 140" stroke="#ff8080"/>
                            <path d="M1388 678l3 145-3 50M1393 876l43-1 166 32" stroke="#80ff80"/>
                            <path d="M1396 679l2 143-5 45M1396 867l42 1 165 31" stroke="#bdbb06"/>
                            <path d="M1437 884l165 31" stroke="#ff8080"/>
                            <path d="M1384 818l-2 50M1383 877l54 7" stroke="#7b00ff"/>
                            <path d="M1399 822v40l39 5" stroke="#f00"/>
                            <path d="M1322 848l50 9" stroke="#00f"/>
                            <path d="M1271 857h110" stroke="#0f0"/>
                            <path d="M1271 866h112M1391 875l-19 145" stroke="#0ff"/>
                            <path d="M1271 874h105M1383 886l-19 133" stroke="#ff0f4b"/>
                            <path d="M1390 856v18M1384 868l12 6" stroke="#e010ff"/>
                            <path d="M1239 852l-1 9M1394 678h5M1603 895v6M1372 1030h3" stroke="#b80016"/>
                            <path d="M1237 861v7" stroke="#7be000"/>
                        </g>
                        <g fill="#ff8080"><path d="M1377 754l5-8 5 8zM1511 895l8 4-9 3z"/></g>
                        <g fill="#80ff80"><path d="M1385 754l5-8 5 8zM1384 839l4 7 5-7zM1512 886l9 5-9 3zM1418 872l-8 4 8 4z"/></g>
                        <g fill="#bdbb06"><path d="M1393 756l5-9 5 9zM1392 837l4 7 4-7zM1512 878l9 5-10 4zM1423 864l-8 4 8 4z"/></g>
                        <g fill="#00f000"><path d="M1311 853l-9 4 9 4zM1377 854l9 4-9 4z"/></g>
                        <g fill="#0ff"><path d="M1311 862l-8 4 8 4zM1375 862l7 4-7 4zM1378 952l4 9 4-8zM1386 886l5-9 4 9z"/></g>
                        <g fill="#ff0f4b"><path d="M1311 870l-9 4 9 4zM1370 870l9 4-9 4zM1369 951l4 10 5-9zM1378 886l5 7 4-7z"/></g>
                        <path d="M1340 848l8 5-9 2z" fill="#00f"/>
                        <path d="M1395 848l4-9 4 9zM1411 860l8 4-8 3z" fill="#f00"/>
                        <path d="M1379 854l4-7 4 7zM1403 876l8 4-8 4z" fill="#7b00ff"/>
                        <path d="M1385 864l5 9 5-8zM1381 872l6 5-6 5z" fill="#e010ff"/>
                        <path d="M1391 846h3v22h-3zM1405 868l14 2-10 3z" fill="#8484ff"/>
                        <g class="scale"><path d="M1317 1045h177M1317 1037v16M1494 1037v16M1352 1042v6M1388 1042v6M1423 1042v6M1458 1042v6"/><text x="1502" y="1050">50 mm</text></g>
                        <g class="triad">
                            <path d="M1137 1015v-23c12 0 20 10 21 24z" fill="#b4b4b4"/>
                            <path d="M1137 1015l20 2" stroke="#1a2fe0" stroke-width="5"/><path d="M1163 1017l-8-5v10z" fill="#0a1798"/>
                            <path d="M1137 1015v-22" stroke="#12b512" stroke-width="4"/><path d="M1137 984l-5 10h10z" fill="#0a9a0a"/>
                            <path d="M1137 1015l-10 2" stroke="#c00" stroke-width="5"/><ellipse cx="1126" cy="1016" rx="4" ry="5" fill="#b50a0a"/>
                            <path d="M1133 966l4 7 4-7M1137 973v8" stroke="#2fe22f"/>
                            <path d="M1164 1003h8l-8 15h8" stroke="#1c30ff"/>
                            <path d="M1120 1003l7 14M1127 1003l-7 14" stroke="#f01818"/>
                        </g>
                    </svg>
                </div>
            </section>
        </div>
    </div>

    <footer class="status">
        <span>Beam splitter using coatings</span><span></span><span></span><span></span><span></span>
    </footer>
</div>
</body>
</html>
```
FILE: styles.css
```
* {
    margin: 0;
    padding: 0;
    box-sizing: border-box;
}
:root {
    --line: #888b96;
    --blue: linear-gradient(#284a9c, #0b246c);
    --steel: linear-gradient(#d3d5da, #b9bcc2);
}
body {
    font-family: "Open Sans", "Noto Sans CJK SC", sans-serif;
    font-size: 15px;
    line-height: 20px;
    color: #111;
    background: #000;
    overflow: hidden;
}
button {
    font: inherit;
    color: inherit;
    background: none;
    border: 0;
}
svg {
    display: block;
    flex: none;
    width: 20px;
    height: 20px;
}
.sprite {
    position: absolute;
    width: 0;
    height: 0;
}
.app {
    display: flex;
    flex-direction: column;
    height: 100vh;
    padding-left: 2px;
}
.caret {
    display: inline-block;
    flex: none;
    border: 3px solid transparent;
    border-top: 4px solid #111;
    border-bottom: 0;
}
.caret.big {
    border-width: 5px 5px 0;
    border-top-color: #d5dcf0;
}

/* 标题栏 */
.titlebar {
    height: 64px;
    background: linear-gradient(to right, transparent 97%, #b5aca4), linear-gradient(#c3bcb5, #e4e1de 45%, #fff 95%);
    border-bottom: 1px solid #aeb0b3;
}
.title-row {
    display: grid;
    grid-template-columns: 55fr auto 45fr;
    align-items: start;
    height: 34px;
}
.quick {
    display: flex;
    align-items: center;
    height: 27px;
    padding-left: 2px;
}
.quick button {
    display: flex;
    align-items: center;
    justify-content: center;
    width: 26px;
}
.quick .wide {
    width: 34px;
    gap: 3px;
}
.logo {
    width: 20px;
    height: 20px;
    border: 1px solid #666;
    background: #f57f17;
    color: #fff;
    font-size: 12px;
    line-height: 18px;
    text-align: center;
}
.bar {
    width: 2px;
    height: 15px;
    margin: 0 9px 0 13px;
    background: #8d8a88;
}
.bar.thin {
    width: 1px;
    height: 19px;
    margin: 0 10px;
}
.app-title {
    font-size: 16px;
    font-weight: 400;
    line-height: 17px;
    white-space: pre;
    text-shadow: 0 0 6px #fff, 0 0 10px #fff;
}
.win-buttons {
    display: flex;
    justify-content: flex-end;
    padding-right: 3px;
}
.win-buttons button {
    display: flex;
    align-items: center;
    justify-content: center;
    width: 58px;
    height: 35px;
}
.win-buttons svg {
    width: 12px;
    height: 12px;
    fill: none;
    stroke: #444;
}
.menu-row {
    display: flex;
    justify-content: space-between;
    height: 29px;
}
.menu {
    display: flex;
}
.menu a {
    padding: 0 16px;
    color: #111;
    line-height: 32px;
    text-decoration: none;
}
.menu .active {
    margin-right: 3px;
    padding: 0 12px;
    border-radius: 4px 4px 0 0;
    background: var(--blue);
    color: #fff;
}
.search {
    display: flex;
    align-items: center;
    gap: 10px;
    height: 26px;
}
.search input {
    width: 175px;
    height: 21px;
    padding: 0 9px;
    border: 1px solid #a9abae;
    background: #fff;
    font: inherit;
    font-size: 15px;
}
.search input::placeholder {
    color: #999;
}
.search button svg {
    width: 12px;
    height: 16px;
}
.lens {
    width: 16px;
    opacity: .6;
}

/* 功能区 */
.ribbon {
    display: flex;
    height: 113px;
    padding-top: 2px;
    background: linear-gradient(#fff, #dadde1);
    border-bottom: 1px solid #5f7488;
}
.group {
    display: flex;
    flex-direction: column;
    justify-content: space-between;
    padding: 5px 11px 0;
    border-right: 3px double #a4a7ad;
}
.lens-files {
    padding: 5px 7px 0 4px;
}
.archive {
    padding: 5px 8px 0;
}
.group-items {
    display: flex;
    gap: 3px;
}
.lens-files .group-items,
.archive .group-items {
    gap: 0;
}
.group button {
    display: flex;
    flex-direction: column;
    align-items: center;
    min-width: 55px;
    padding: 0 3px;
    line-height: 24px;
    white-space: nowrap;
}
.group button svg {
    width: 38px;
    height: 38px;
}
.group .caret {
    margin-top: 4px;
}
.group h2 {
    font-size: 15px;
    font-weight: 400;
    line-height: 22px;
    color: #555;
    text-align: center;
}
.t-dxf {
    font: bold 7px "Liberation Sans", sans-serif;
    fill: #fff;
}
.t-ab {
    font: bold 14px "Liberation Serif", serif;
}
.t-ring {
    font: bold 11px "Liberation Sans", sans-serif;
    fill: #27408f;
}

/* 左侧 */
.main {
    display: flex;
    flex: 1;
    min-height: 0;
}
.sidebar {
    display: flex;
    flex-direction: column;
    width: 313px;
    background: linear-gradient(#fff 50px, #d9dce1);
}
.side-head {
    display: flex;
    align-items: center;
    gap: 6px;
    height: 27px;
    padding: 0 6px 2px 8px;
    background: var(--blue);
    color: #fff;
}
.side-head .help {
    width: 17px;
    height: 17px;
}
.side-head .push {
    margin-left: auto;
    margin-right: 5px;
    line-height: 10px;
}
.side-head .pin {
    width: 10px;
    height: 14px;
}
.side-update {
    display: flex;
    align-items: center;
    gap: 5px;
    height: 29px;
    padding: 2px 0 0 8px;
    border-bottom: 1px solid #a9abae;
    background: #fff;
}
.tree {
    padding-top: 2px;
    list-style: none;
}
.tree button {
    display: flex;
    align-items: center;
    gap: 11px;
    height: 21px;
    padding-left: 5px;
}
.tree button::before {
    content: "";
    border: 5px solid transparent;
    border-left: 5px solid #444;
    border-right: 0;
}

/* 工作区 */
.work {
    display: grid;
    flex: 1;
    min-width: 0;
    grid-template-columns: 760fr 757fr;
    grid-template-rows: 335fr 543fr;
    gap: 6px;
    padding-left: 6px;
    background: var(--line);
}
.panel {
    display: flex;
    flex-direction: column;
    min-width: 0;
    min-height: 0;
    overflow: hidden;
    background: #fcfcfd;
}
.editor {
    grid-column: 1 / 3;
}
.tabs {
    display: flex;
    align-items: flex-end;
    justify-content: space-between;
    flex: none;
    height: 30px;
    padding-left: 7px;
    border-bottom: 1px solid var(--line);
    background: #caccd1;
}
.tab {
    display: flex;
    height: 25px;
    margin-bottom: -1px;
    color: #fff;
}
.slope {
    width: 24px;
    height: 25px;
}
.tab-body {
    display: flex;
    align-items: center;
    gap: 8px;
    padding: 0 5px 2px 0;
    border-top: 1px solid var(--line);
    border-right: 1px solid var(--line);
    background: #fff;
    color: #111;
}
.tab-body svg {
    width: 16px;
    height: 16px;
}
.tab-body button {
    margin-left: -3px;
}
.tab-body .plate {
    background: #fff;
}
.current {
    color: #c6defb;
}
.current .tab-body {
    background: #c6defb;
}
.right .tabs {
    box-shadow: 0 2px #bdd8fa;
}
.tab-list {
    width: 12px;
    height: 12px;
    margin: 0 1px 9px 0;
}
.view .tab-list {
    margin-right: 5px;
}
.right .tab-list {
    margin-right: 1px;
}
.toolbar {
    display: flex;
    align-items: center;
    flex: none;
    height: 36px;
    background: linear-gradient(#fff, #f9fafb);
}
.toolbar button {
    display: flex;
    align-items: center;
    justify-content: center;
    width: 26px;
    height: 28px;
}
.toolbar button svg {
    width: 19px;
    height: 19px;
}
.toolbar .on {
    border: 1px solid #c39a3f;
    border-radius: 2px;
    background: linear-gradient(#fbd8a0, #fdc55c);
}
.toolbar .text {
    gap: 5px;
    width: auto;
    white-space: nowrap;
}
.toolbar .first {
    padding: 0 2px 0 44px;
}
.sep {
    flex: none;
    width: 1px;
    height: 28px;
    margin: 0 3px 0 2px;
    background: #b4c8e0;
}
.near {
    margin: 0 1px;
}
.toolbar .cad {
    gap: 4px;
    width: 36px;
    font: bold 9px "Liberation Sans", sans-serif;
}
.toolbar .zed {
    gap: 6px;
    width: 38px;
    font-size: 20px;
    font-weight: 700;
}
.propbar {
    display: flex;
    align-items: center;
    flex: none;
    gap: 5px;
    height: 34px;
    padding: 0 361px 0 3px;
    border-top: 1px solid #b0b3b8;
    border-bottom: 1px solid #9a9da4;
    background: var(--steel);
}
.round {
    display: flex;
    align-items: center;
    justify-content: center;
    width: 29px;
    height: 29px;
    border: 1px solid #999;
    border-radius: 50%;
    background: #fff;
    color: #555;
}
.round.off {
    background: none;
    color: #8b8b8b;
}
.prop-no {
    margin: 0 3px 0 8px;
}
.config {
    margin-left: auto;
    margin-right: 3px;
}

/* 数据表 */
.grid-wrap {
    flex: 1;
    min-height: 0;
    padding: 12px 1px 6px 5px;
    background: linear-gradient(#f8f9fa, #dde0e5);
}
.grid-box {
    display: grid;
    grid-template-columns: 1fr 20px;
    grid-template-rows: 1fr 20px;
    height: 100%;
    overflow: hidden;
    border: 1px solid #7b96ac;
    border-radius: 12px;
    background: #eee;
}
.grid-view {
    min-width: 0;
    min-height: 0;
    overflow: hidden;
}
.grid {
    width: 1500px;
    min-width: 100%;
    table-layout: fixed;
    border-collapse: collapse;
    font-size: 17px;
}
.c-no { width: 20px; }
.c-type { width: 221px; }
.c-note { width: 121px; }
.c-ref { width: 114px; }
.c-in { width: 104px; }
.c-pos { width: 90px; }
.c-fit { width: 24px; }
.c-tiltx { width: 110px; }
.c-tilt { width: 92px; }
.c-mat { width: 61px; }
.c-half { width: 102px; }
.grid thead th {
    height: 29px;
    border-right: 1px solid #9a9da4;
    background: var(--steel);
    font-size: 18px;
    white-space: nowrap;
}
.corner i {
    display: block;
    margin: 10px 2px 0 auto;
    width: 0;
    border: 4px solid #888;
    border-top-color: transparent;
    border-left-color: transparent;
}
.grid tbody tr {
    height: 29px;
}
.grid tbody th {
    border-bottom: 1px solid #9a9da4;
    background: linear-gradient(to right, #dadce1, #b9bcc2);
}
.grid td {
    padding: 0 3px;
    border-right: 1px solid #c9c9cf;
    border-bottom: 2px solid #c9c9c9;
    text-align: right;
    white-space: nowrap;
}
.grid .type {
    padding: 0 7px 0 0;
}
.type span {
    display: flex;
    align-items: center;
    gap: 6px;
}
.type span::after {
    content: "";
    border: 5px solid transparent;
    border-top: 5px solid #111;
    border-bottom: 0;
}
.type select {
    flex: 1;
    appearance: none;
    border: 0;
    background: none;
    font: inherit;
    font-size: 18px;
    line-height: 24px;
    text-align-last: right;
}
.source { background: #e6e722; }
.solid { background: #d2d2ff; }
.detector { background: #dcc2b9; }
.vscroll {
    display: flex;
    flex-direction: column;
    align-items: center;
    padding-top: 30px;
    color: #888;
}
.vthumb {
    width: 20px;
    height: 89px;
    background: #cdcdcd;
}
.vscroll .end {
    margin-top: auto;
}
.hscroll {
    display: flex;
    grid-column: 1 / 3;
    padding: 0 20px 0 243px;
    color: #888;
}
.hthumb {
    width: 42%;
    background: #cdcdcd;
}
.hscroll .end {
    margin-left: auto;
}

/* 视图 */
.view-tools {
    padding: 1px 0;
    background: #fdfdfe;
}
.view .toolbar {
    height: 34px;
    padding-left: 7px;
    background: none;
}
.view .second {
    height: 30px;
    padding-left: 16px;
}
.toolbar .small {
    width: 20px;
    height: 20px;
}
.toolbar .set {
    padding: 0 2px 0 5px;
}
.toolbar .letter {
    font-size: 22px;
    font-weight: 700;
}
.toolbar .plane {
    font-family: "DejaVu Sans", sans-serif;
    font-size: 10px;
}
.gap {
    margin: 0 4px 0 3px;
}
.toolbar .grad {
    gap: 3px;
    width: 38px;
    margin-left: 6px;
}
.toolbar .lw {
    padding: 0 5px 0 9px;
}
.stage {
    flex: 1;
    min-height: 0;
    padding: 0 5px 5px;
    background: #dcdfe4;
}
.right .stage {
    padding-right: 0;
}
.stage svg {
    width: 100%;
    height: 100%;
}
.rays {
    fill: none;
    stroke-width: 2.5;
}
.wire {
    fill: none;
    stroke: #fff;
    stroke-width: 1.5;
}
.scale {
    stroke: #000;
    stroke-width: 2;
}
.scale text {
    font: 16px "Liberation Sans", sans-serif;
    stroke: none;
}
.triad {
    fill: none;
}

.status {
    display: grid;
    grid-template-columns: 366fr repeat(3, 370fr) 366fr;
    height: 19px;
    background: var(--blue);
    color: #fff;
}
.status span {
    padding-left: 2px;
    border-right: 1px solid #3f62b0;
    overflow: hidden;
    line-height: 20px;
    font-size: 15px;
}
```
